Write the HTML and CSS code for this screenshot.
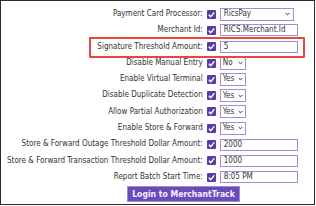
FILE: index.html
```html
<!DOCTYPE html>
<html>
<head>
<meta charset="utf-8">
<link rel="stylesheet" href="styles.css">
</head>
<body>
<div class="frame">
  <div class="form">
    <label class="lbl">Payment Card Processor:</label>
    <span class="cb"><svg viewBox="0 0 8 8"><path d="M1.6 4.2 L3.3 5.9 L6.5 2.1"/></svg></span>
    <span class="sel wide">RicsPay<svg class="caret" viewBox="0 0 6 4"><path d="M0.8 0.8 L3 3 L5.2 0.8"/></svg></span>

    <label class="lbl">Merchant Id:</label>
    <span class="cb"><svg viewBox="0 0 8 8"><path d="M1.6 4.2 L3.3 5.9 L6.5 2.1"/></svg></span>
    <span class="txt">RICS.Merchant.Id</span>

    <label class="lbl">Signature Threshold Amount:</label>
    <span class="cb"><svg viewBox="0 0 8 8"><path d="M1.6 4.2 L3.3 5.9 L6.5 2.1"/></svg></span>
    <span class="txt">5</span>

    <label class="lbl">Disable Manual Entry</label>
    <span class="cb"><svg viewBox="0 0 8 8"><path d="M1.6 4.2 L3.3 5.9 L6.5 2.1"/></svg></span>
    <span class="sel small">No<svg class="caret" viewBox="0 0 6 4"><path d="M0.8 0.8 L3 3 L5.2 0.8"/></svg></span>

    <label class="lbl">Enable Virtual Terminal</label>
    <span class="cb"><svg viewBox="0 0 8 8"><path d="M1.6 4.2 L3.3 5.9 L6.5 2.1"/></svg></span>
    <span class="sel small">Yes<svg class="caret" viewBox="0 0 6 4"><path d="M0.8 0.8 L3 3 L5.2 0.8"/></svg></span>

    <label class="lbl">Disable Duplicate Detection</label>
    <span class="cb"><svg viewBox="0 0 8 8"><path d="M1.6 4.2 L3.3 5.9 L6.5 2.1"/></svg></span>
    <span class="sel small">Yes<svg class="caret" viewBox="0 0 6 4"><path d="M0.8 0.8 L3 3 L5.2 0.8"/></svg></span>

    <label class="lbl">Allow Partial Authorization</label>
    <span class="cb"><svg viewBox="0 0 8 8"><path d="M1.6 4.2 L3.3 5.9 L6.5 2.1"/></svg></span>
    <span class="sel small">Yes<svg class="caret" viewBox="0 0 6 4"><path d="M0.8 0.8 L3 3 L5.2 0.8"/></svg></span>

    <label class="lbl">Enable Store &amp; Forward</label>
    <span class="cb"><svg viewBox="0 0 8 8"><path d="M1.6 4.2 L3.3 5.9 L6.5 2.1"/></svg></span>
    <span class="sel small">Yes<svg class="caret" viewBox="0 0 6 4"><path d="M0.8 0.8 L3 3 L5.2 0.8"/></svg></span>

    <label class="lbl">Store &amp; Forward Outage Threshold Dollar Amount:</label>
    <span class="cb"><svg viewBox="0 0 8 8"><path d="M1.6 4.2 L3.3 5.9 L6.5 2.1"/></svg></span>
    <span class="txt">2000</span>

    <label class="lbl">Store &amp; Forward Transaction Threshold Dollar Amount:</label>
    <span class="cb"><svg viewBox="0 0 8 8"><path d="M1.6 4.2 L3.3 5.9 L6.5 2.1"/></svg></span>
    <span class="txt">1000</span>

    <label class="lbl">Report Batch Start Time:</label>
    <span class="cb"><svg viewBox="0 0 8 8"><path d="M1.6 4.2 L3.3 5.9 L6.5 2.1"/></svg></span>
    <span class="txt">8:05 PM</span>

    <div class="actions"><span class="btn">Login to MerchantTrack</span></div>
  </div>
  <div class="highlight"></div>
</div>
</body>
</html>
```

FILE: styles.css
```css
html, body {
  margin: 0;
  padding: 0;
  background: #ffffff;
}
.frame {
  position: relative;
  box-sizing: border-box;
  width: 315px;
  height: 205px;
  border: 1.5px solid #2a2a2a;
  font-family: "DejaVu Sans Condensed", "DejaVu Sans", sans-serif;
  font-size: 8px;
  color: #333333;
}
.form {
  display: grid;
  grid-template-columns: max-content 9px 1fr;
  column-gap: 4px;
  align-items: center;
  padding: 5px 16px 0 6px;
}
.lbl {
  justify-self: end;
  height: 16.3px;
  line-height: 16.3px;
  white-space: nowrap;
}
.cb {
  width: 9px;
  height: 9px;
  background: #5a3ca8;
  border-radius: 1px;
  display: flex;
}
.cb svg {
  width: 9px;
  height: 9px;
  fill: none;
  stroke: #ffffff;
  stroke-width: 1.3;
}
.txt, .sel {
  box-sizing: border-box;
  border: 1px solid #9f8fd8;
  height: 12px;
  line-height: 10px;
  padding: 0 3px;
  color: #333333;
  display: flex;
  align-items: center;
  justify-content: space-between;
  background: #ffffff;
}
.txt {
  width: 100%;
}
.sel {
  height: 13px;
}
.sel.wide {
  width: 74px;
}
.sel.small {
  width: 26px;
  padding: 0 2px;
}
.caret {
  width: 5px;
  height: 4px;
  fill: none;
  stroke: #333333;
  stroke-width: 1.2;
}
.actions {
  grid-column: 1 / -1;
  display: flex;
  justify-content: center;
  padding: 1px 0 0 62px;
}
.btn {
  background: #6a4cb8;
  color: #f4f0ff;
  border: 1px solid #9d8ad6;
  font-weight: bold;
  font-size: 8.6px;
  padding: 2px 4px;
  line-height: 10px;
}
.highlight {
  position: absolute;
  left: 88px;
  top: 36px;
  width: 216px;
  height: 21px;
  box-sizing: border-box;
  border: 2px solid #e8473d;
  border-radius: 1px;
}
```
